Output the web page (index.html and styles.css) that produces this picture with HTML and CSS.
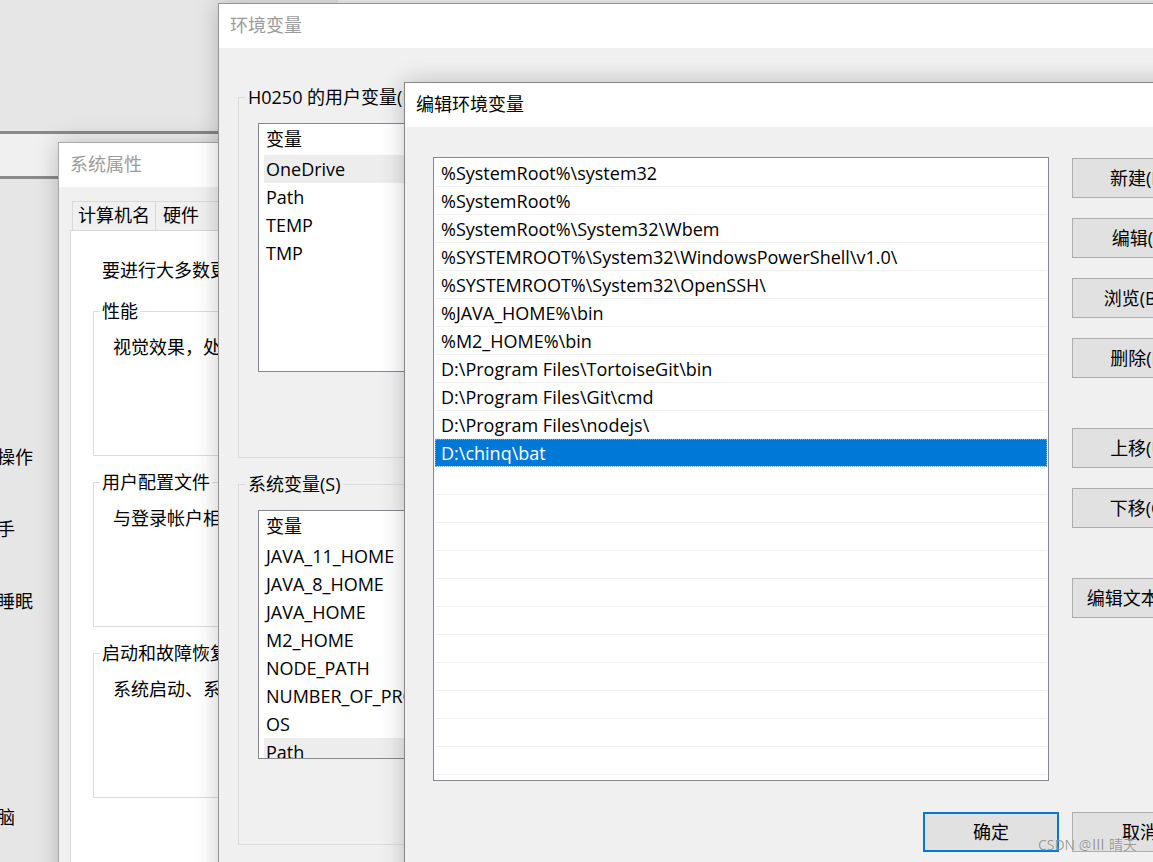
FILE: index.html
```html
<!DOCTYPE html>
<html lang="zh-CN">
<head>
  <meta charset="UTF-8">
  <title>编辑环境变量</title>
  <link rel="stylesheet" href="styles.css">
</head>
<body>
  <!-- settings app behind everything -->
  <div class="settings-nav">
    <div class="nav-item">通知和操作</div>
    <div class="nav-item">专注助手</div>
    <div class="nav-item">电源和睡眠</div>
    <div class="nav-item">存储</div>
    <div class="nav-item">电池</div>
    <div class="nav-item">平板电脑</div>
  </div>
  <div class="settings-band"></div>
  <div class="top-strip"></div>

  <section class="window sysprops">
    <header class="titlebar">系统属性</header>
    <div class="win-body">
      <div class="tabs">
        <span class="tab">计算机名</span>
        <span class="tab wide">硬件</span>
        <span class="tab">高级</span>
      </div>
      <div class="tab-panel">
        <p class="note">要进行大多数更改，你必须作为管理员登录。</p>
        <fieldset class="group">
          <legend>性能</legend>
          <p>视觉效果，处理器计划，内存使用，以及虚拟内存</p>
        </fieldset>
        <fieldset class="group">
          <legend>用户配置文件</legend>
          <p>与登录帐户相关的桌面设置</p>
        </fieldset>
        <fieldset class="group">
          <legend>启动和故障恢复</legend>
          <p>系统启动、系统故障和调试信息</p>
        </fieldset>
      </div>
    </div>
  </section>

  <section class="window envvars">
    <header class="titlebar">环境变量</header>
    <div class="win-body">
      <fieldset class="var-group">
        <legend>H0250 的用户变量(U)</legend>
        <div class="var-list">
          <div class="head">变量</div>
          <div class="row dim">OneDrive</div>
          <div class="row">Path</div>
          <div class="row">TEMP</div>
          <div class="row">TMP</div>
        </div>
      </fieldset>
      <fieldset class="var-group">
        <legend>系统变量(S)</legend>
        <div class="var-list">
          <div class="head">变量</div>
          <div class="row">JAVA_11_HOME</div>
          <div class="row">JAVA_8_HOME</div>
          <div class="row">JAVA_HOME</div>
          <div class="row">M2_HOME</div>
          <div class="row">NODE_PATH</div>
          <div class="row">NUMBER_OF_PROCESSORS</div>
          <div class="row">OS</div>
          <div class="row dim">Path</div>
        </div>
      </fieldset>
    </div>
  </section>

  <section class="window editenv">
    <header class="titlebar active">编辑环境变量</header>
    <div class="win-body">
      <div class="edit-main">
        <div class="path-list">
          <div class="path-row">%SystemRoot%\system32</div>
          <div class="path-row">%SystemRoot%</div>
          <div class="path-row">%SystemRoot%\System32\Wbem</div>
          <div class="path-row">%SYSTEMROOT%\System32\WindowsPowerShell\v1.0\</div>
          <div class="path-row">%SYSTEMROOT%\System32\OpenSSH\</div>
          <div class="path-row">%JAVA_HOME%\bin</div>
          <div class="path-row">%M2_HOME%\bin</div>
          <div class="path-row">D:\Program Files\TortoiseGit\bin</div>
          <div class="path-row">D:\Program Files\Git\cmd</div>
          <div class="path-row">D:\Program Files\nodejs\</div>
          <div class="path-row selected">D:\chinq\bat</div>
          <div class="path-row"></div>
          <div class="path-row"></div>
          <div class="path-row"></div>
          <div class="path-row"></div>
          <div class="path-row"></div>
          <div class="path-row"></div>
          <div class="path-row"></div>
          <div class="path-row"></div>
          <div class="path-row"></div>
          <div class="path-row"></div>
          <div class="path-row"></div>
        </div>
        <div class="side-buttons">
          <button class="btn">新建(N)</button>
          <button class="btn">编辑(E)</button>
          <button class="btn">浏览(B)...</button>
          <button class="btn">删除(D)</button>
          <button class="btn spaced">上移(U)</button>
          <button class="btn">下移(O)</button>
          <button class="btn spaced">编辑文本(T)...</button>
        </div>
      </div>
      <div class="dialog-buttons">
        <button class="btn default">确定</button>
        <button class="btn">取消</button>
      </div>
    </div>
  </section>

  <div class="watermark">CSDN @Ⅲ 晴天</div>
</body>
</html>
```

FILE: styles.css
```css
* {
  box-sizing: border-box;
}
body {
  margin: 0;
  width: 1153px;
  height: 862px;
  overflow: hidden;
  position: relative;
  background: #e6e6e6;
  color: #000;
  font-family: "Open Sans", "Noto Sans CJK SC", sans-serif;
  font-size: 18px;
  line-height: 20px;
}
p {
  margin: 0;
}

/* back layer */
.settings-nav {
  position: absolute;
  left: -57px;
  top: 448px;
  display: flex;
  flex-direction: column;
}
.nav-item {
  height: 72px;
  line-height: 18px;
  white-space: nowrap;
}
.settings-band {
  position: absolute;
  left: 0;
  top: 131px;
  width: 220px;
  height: 48px;
  background: #f0f0f0;
  border-top: 3px solid #8a8a8a;
  border-bottom: 3px solid #8a8a8a;
}
.top-strip {
  position: absolute;
  left: 338px;
  top: 0;
  width: 815px;
  height: 3px;
  background: #f3f3f3;
}

/* windows */
.window {
  position: absolute;
  display: flex;
  flex-direction: column;
  background: #f0f0f0;
  border: 1px solid #9a9a9a;
  box-shadow: 0 0 22px rgba(0, 0, 0, 0.22);
  overflow: hidden;
}
.titlebar {
  height: 44px;
  flex: none;
  display: flex;
  align-items: center;
  padding: 0 0 2px 11px;
  background: #fff;
  color: #9b9b9b;
}
.titlebar.active {
  color: #000;
}
.win-body {
  flex: 1;
  background: #f0f0f0;
}

/* 系统属性 */
.sysprops {
  left: 58px;
  top: 142px;
  width: 420px;
  height: 760px;
  border-color: #a8a8a8;
}
.sysprops .win-body {
  padding: 14px 0 0 11px;
}
.tabs {
  display: flex;
  margin-left: 2px;
  height: 29px;
}
.tab {
  height: 29px;
  line-height: 27px;
  padding: 0 5px;
  border: 1px solid #d9d9d9;
  border-bottom: none;
  background: #f0f0f0;
}
.tab.wide {
  padding: 0 30px 0 7px;
}
.tab + .tab {
  margin-left: -1px;
}
.tab-panel {
  height: 700px;
  background: #fff;
  border: 1px solid #d9d9d9;
  padding: 29px 0 0 22px;
}
.note {
  margin-left: 9px;
  white-space: nowrap;
}
.group {
  margin: 16px 0 0;
  width: 360px;
  height: 155px;
  padding: 0 0 0 19px;
  border: 1px solid #dcdcdc;
}
.group:first-of-type {
  margin-top: 21px;
}
.group legend,
.var-group legend {
  padding: 0 2px;
  margin-left: -13px;
  line-height: 20px;
  white-space: nowrap;
}
.group p {
  margin-top: 16px;
  white-space: nowrap;
}

/* 环境变量 */
.envvars {
  left: 218px;
  top: 3px;
  width: 980px;
  height: 900px;
  border-color: #949494;
}
.envvars .win-body {
  padding: 39px 0 0 19px;
}
.var-group {
  margin: 0;
  width: 900px;
  height: 371px;
  padding: 0 0 0 19px;
  border: 1px solid #dcdcdc;
}
.var-group + .var-group {
  margin-top: 16px;
}
.var-group legend {
  margin-left: -12px;
}
.var-list {
  margin-top: 16px;
  width: 640px;
  height: 249px;
  background: #fff;
  border: 1px solid #828790;
  overflow: hidden;
}
.var-list .head {
  height: 31px;
  line-height: 31px;
  padding-left: 7px;
}
.var-list .row {
  height: 28px;
  line-height: 28px;
  margin-left: 5px;
  padding-left: 2px;
  white-space: nowrap;
}
.var-list .row.dim {
  background: #ededed;
}

/* 编辑环境变量 */
.editenv {
  left: 404px;
  top: 82px;
  width: 833px;
  height: 820px;
  border-color: #868686;
}
.editenv .win-body {
  padding: 30px 28px 0;
}
.edit-main {
  display: flex;
  gap: 23px;
}
.path-list {
  width: 616px;
  height: 624px;
  padding-top: 1px;
  background: #fff;
  border: 1px solid #828790;
  overflow: hidden;
}
.path-row {
  height: 28px;
  line-height: 28px;
  margin: 0 1px;
  padding-left: 6px;
  border-bottom: 1px solid #f0f0f0;
  white-space: nowrap;
}
.path-row.selected {
  background: #0078d7;
  color: #fff;
  outline: 1px dotted #6aaee8;
  outline-offset: -1px;
}
.side-buttons {
  display: flex;
  flex-direction: column;
  gap: 20px;
  padding-top: 1px;
}
.btn {
  width: 136px;
  height: 40px;
  padding: 0;
  display: flex;
  align-items: center;
  justify-content: center;
  background: #e1e1e1;
  border: 1px solid #adadad;
  color: #000;
  font: inherit;
  white-space: nowrap;
}
.btn.spaced {
  margin-top: 30px;
}
.btn.default {
  border: 2px solid #0078d7;
}
.dialog-buttons {
  display: flex;
  justify-content: flex-end;
  gap: 13px;
  margin-top: 31px;
}

.watermark {
  position: absolute;
  right: 16px;
  bottom: 8px;
  font-size: 14px;
  line-height: 18px;
  color: rgba(110, 110, 110, 0.7);
  text-shadow: 0 0 1px rgba(255, 255, 255, 0.8);
  white-space: nowrap;
}
```
